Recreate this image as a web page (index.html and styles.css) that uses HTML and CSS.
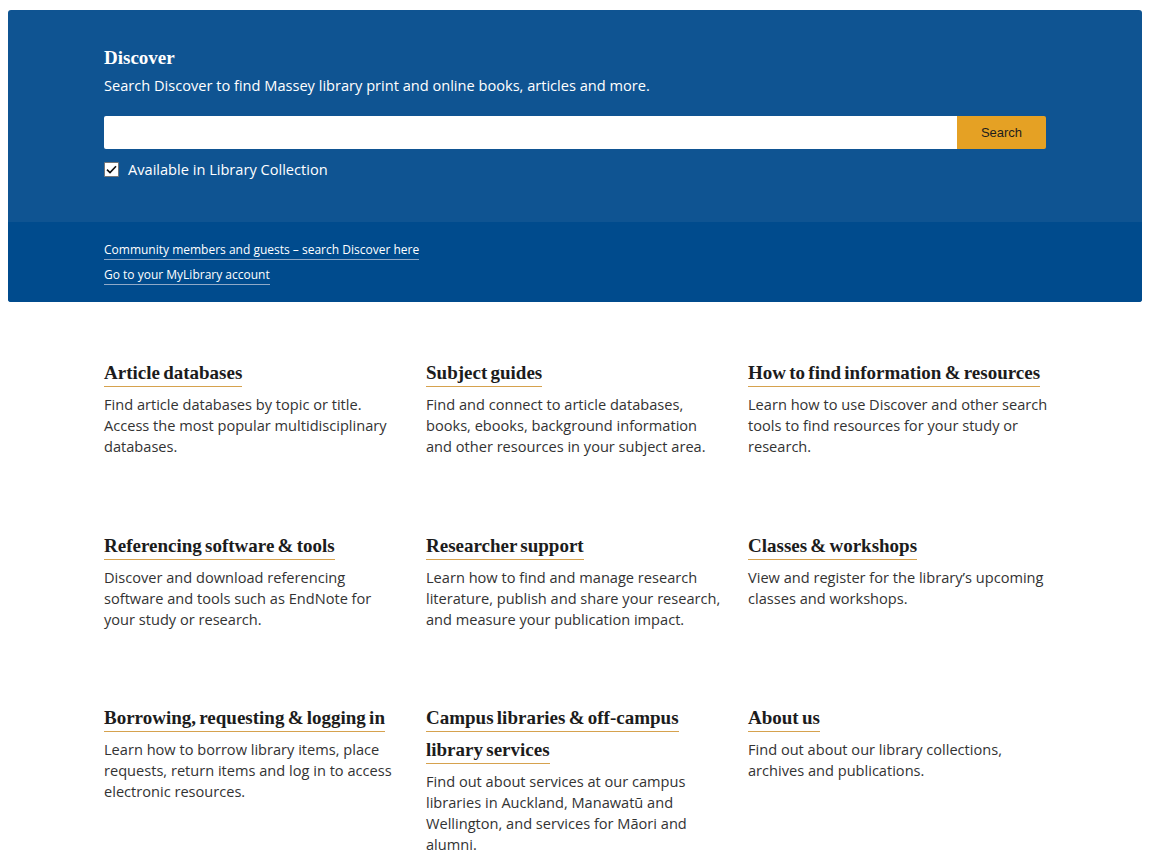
FILE: index.html
```html
<!DOCTYPE html>
<html lang="en">

<head>
    <meta charset="UTF-8">
    <meta name="viewport" content="width=device-width, initial-scale=1.0">
    <title>Library</title>
    <link rel="stylesheet" href="styles.css">
</head>

<body>
    <section class="discover">
        <div class="discover-main">
            <h2>Discover</h2>
            <p>Search Discover to find Massey library print and online books, articles and more.</p>
            <form class="search-row">
                <input type="text" class="search-input" aria-label="Search">
                <button type="button" class="search-button">Search</button>
            </form>
            <label class="collection-check">
                <span class="check-box">
                    <svg width="11" height="9" viewBox="0 0 11 9"><path d="M1 4.6 L4 7.5 L10 1.2" fill="none" stroke="#111" stroke-width="1.6"/></svg>
                </span>
                Available in Library Collection
            </label>
        </div>
        <div class="discover-links">
            <a href="#">Community members and guests – search Discover here</a>
            <a href="#">Go to your MyLibrary account</a>
        </div>
    </section>

    <section class="tiles">
        <div class="tile">
            <h3><a href="#">Article databases</a></h3>
            <p>Find article databases by topic or title. Access the most popular multidisciplinary databases.</p>
        </div>
        <div class="tile">
            <h3><a href="#">Subject guides</a></h3>
            <p>Find and connect to article databases, books, ebooks, background information and other resources in your subject area.</p>
        </div>
        <div class="tile">
            <h3><a href="#">How to find information &amp; resources</a></h3>
            <p>Learn how to use Discover and other search tools to find resources for your study or research.</p>
        </div>
        <div class="tile">
            <h3><a href="#">Referencing software &amp; tools</a></h3>
            <p>Discover and download referencing software and tools such as EndNote for your study or research.</p>
        </div>
        <div class="tile">
            <h3><a href="#">Researcher support</a></h3>
            <p>Learn how to find and manage research literature, publish and share your research, and measure your publication impact.</p>
        </div>
        <div class="tile">
            <h3><a href="#">Classes &amp; workshops</a></h3>
            <p>View and register for the library’s upcoming classes and workshops.</p>
        </div>
        <div class="tile">
            <h3><a href="#">Borrowing, requesting &amp; logging in</a></h3>
            <p>Learn how to borrow library items, place requests, return items and log in to access electronic resources.</p>
        </div>
        <div class="tile">
            <h3><a href="#">Campus libraries &amp; off-campus library services</a></h3>
            <p>Find out about services at our campus libraries in Auckland, Manawatū and Wellington, and services for Māori and alumni.</p>
        </div>
        <div class="tile">
            <h3><a href="#">About us</a></h3>
            <p>Find out about our library collections, archives and publications.</p>
        </div>
    </section>
</body>

</html>
```

FILE: styles.css
```css
/* Reset */
* {
    margin: 0;
    padding: 0;
    box-sizing: border-box;
}

body {
    font-family: 'Open Sans', 'Liberation Sans', sans-serif;
    background-color: #ffffff;
    color: #333333;
    padding: 10px 12px 0 8px;
}

/* Discover search panel */
.discover {
    background-color: #0f5492;
    border-radius: 3px;
    overflow: hidden;
    color: #ffffff;
}

.discover-main {
    padding: 36px 96px 43px;
}

.discover h2 {
    font-family: 'Liberation Serif', 'DejaVu Serif', serif;
    font-size: 19px;
    font-weight: bold;
    line-height: 24px;
    margin-bottom: 4px;
    word-spacing: -1px;
}

.discover-main p {
    font-size: 14.6px;
    line-height: 22px;
}

.search-row {
    display: flex;
    margin-top: 20px;
    width: 942px;
}

.search-input {
    flex: 1;
    height: 33px;
    border: none;
    border-radius: 2px 0 0 2px;
    background: #ffffff;
    outline: none;
    padding: 0 10px;
}

.search-button {
    width: 89px;
    height: 33px;
    border: none;
    background-color: #e5a124;
    color: #1d1d1d;
    font-family: 'Liberation Sans', sans-serif;
    font-size: 13px;
    border-radius: 0 2px 2px 0;
    cursor: pointer;
}

.collection-check {
    display: flex;
    align-items: center;
    gap: 9px;
    margin-top: 10px;
    font-size: 14.6px;
    line-height: 20px;
}

.check-box {
    width: 15px;
    height: 15px;
    background: #ffffff;
    border: 1px solid #767676;
    border-radius: 1px;
    display: flex;
    align-items: center;
    justify-content: center;
}

.discover-links {
    background-color: #004b8d;
    padding: 18px 96px 17px;
    display: flex;
    flex-direction: column;
    align-items: flex-start;
    gap: 5px;
}

.discover-links a {
    color: #ffffff;
    font-size: 12px;
    line-height: 19px;
    text-decoration: none;
    border-bottom: 1px solid #8fa9c8;
}

/* Link tiles */
.tiles {
    display: grid;
    grid-template-columns: 298px 298px 302px;
    column-gap: 24px;
    padding: 55px 96px 0;
}

.tile {
    min-height: 172.5px;
}

.tile h3 {
    font-family: 'Liberation Serif', 'DejaVu Serif', serif;
    font-size: 19px;
    font-weight: bold;
    line-height: 32px;
    margin-bottom: 5px;
    word-spacing: -1.5px;
}

.tile h3 a {
    color: #1c1c1c;
    text-decoration: none;
    padding-bottom: 3px;
    border-bottom: 1px solid #d6a24e;
}

.tile p {
    font-size: 14.6px;
    line-height: 21px;
    color: #333333;
}
```
